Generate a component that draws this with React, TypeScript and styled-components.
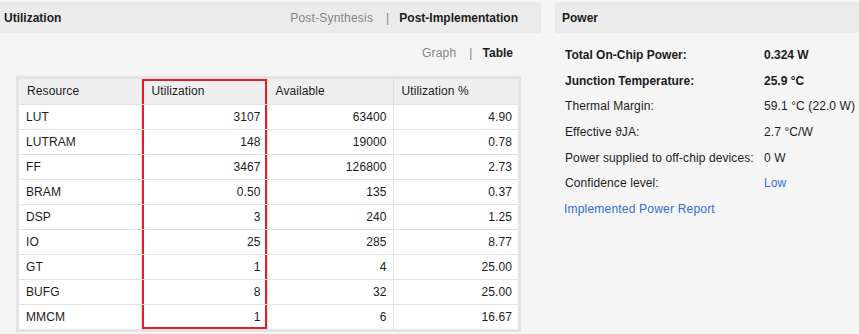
import React from "react";
import styled, { createGlobalStyle } from "styled-components";

const Global = createGlobalStyle`
  html, body { margin: 0; padding: 0; background: #f5f5f5; }
  body { font-family: "Liberation Sans", Arial, sans-serif; font-size: 12px; color: #1c1c1c; letter-spacing: 0.1px; }
`;

const Page = styled.div`
  display: flex;
  gap: 14px;
  padding-top: 2px;
  width: 859px;
  height: 334px;
  box-sizing: border-box;
  overflow: hidden;
`;

const Panel = styled.section<{ $w: number }>`
  width: ${(p) => p.$w}px;
  flex: none;
  display: flex;
  flex-direction: column;
`;

const PanelHeader = styled.div<{ $padL: number; $padR?: number }>`
  height: 31px;
  background: #ebebeb;
  display: flex;
  align-items: center;
  justify-content: space-between;
  padding: 0 ${(p) => p.$padR ?? 0}px 0 ${(p) => p.$padL}px;
`;

const Title = styled.span`
  font-weight: bold;
  font-size: 12px;
  letter-spacing: 0;
`;

const Tabs = styled.div`
  display: flex;
  align-items: center;
`;

const Tab = styled.span<{ $active?: boolean }>`
  font-weight: ${(p) => (p.$active ? "bold" : "normal")};
  letter-spacing: ${(p) => (p.$active ? "0" : "0.2px")};
  color: ${(p) => (p.$active ? "#1c1c1c" : "#858585")};
`;

const Sep = styled.span`
  color: #858585;
  margin: 0 10px 0 13px;
`;

const ViewBar = styled.div`
  height: 40px;
  display: flex;
  justify-content: flex-end;
  align-items: center;
  padding: 0 28px 3px 0;
`;

const TableFrame = styled.div`
  margin-left: 16px;
  width: 499px;
  border: 3px solid #e4e4e4;
`;

const Table = styled.table`
  width: 499px;
  border-collapse: collapse;
  table-layout: fixed;
  background: #fff;
`;

const Th = styled.th<{ $hl?: boolean }>`
  height: 25px;
  box-sizing: border-box;
  background: #efefef;
  font-weight: normal;
  text-align: left;
  padding: 0 6px 0 8px;
  border-right: 1px solid #e2e2e2;
  border-bottom: 1px solid #e2e2e2;
  &:last-child { border-right: none; }
  ${(p) => p.$hl && `box-shadow: inset 2px 0 0 #e41e26, inset -2px 0 0 #e41e26, inset 0 2px 0 #e41e26; padding-left: 10px;`}
`;

const Td = styled.td<{ $num?: boolean; $hl?: boolean; $last?: boolean }>`
  height: 25px;
  box-sizing: border-box;
  text-align: ${(p) => (p.$num ? "right" : "left")};
  padding: 0 6px 0 7px;
  border-right: 1px solid #e2e2e2;
  border-bottom: 1px solid #e2e2e2;
  &:last-child { border-right: none; }
  ${(p) =>
    p.$hl &&
    `box-shadow: inset 2px 0 0 #e41e26, inset -2px 0 0 #e41e26${p.$last ? ", inset 0 -2px 0 #e41e26" : ""};`}
`;

const Tr = styled.tr<{ $last?: boolean }>`
  ${(p) => p.$last && `td { border-bottom: none; }`}
`;

const PowerBody = styled.div`
  padding: 9px 0 0 10px;
  display: flex;
  flex-direction: column;
`;

const PRow = styled.div`
  display: grid;
  grid-template-columns: 199px 1fr;
  height: 25.7px;
  align-items: center;
`;

const PLabel = styled.span<{ $bold?: boolean }>`
  font-weight: ${(p) => (p.$bold ? "bold" : "normal")};
  letter-spacing: ${(p) => (p.$bold ? "0" : "inherit")};
`;

const PValue = styled.span<{ $bold?: boolean; $link?: boolean }>`
  font-weight: ${(p) => (p.$bold ? "bold" : "normal")};
  letter-spacing: ${(p) => (p.$bold ? "0" : "inherit")};
  color: ${(p) => (p.$link ? "#2f6fd8" : "inherit")};
`;

const Link = styled.a`
  color: #2f6fd8;
  text-decoration: none;
  letter-spacing: 0.2px;
  height: 25.7px;
  display: flex;
  align-items: center;
  margin-left: -1px;
`;

const rows: [string, string, string, string][] = [
  ["LUT", "3107", "63400", "4.90"],
  ["LUTRAM", "148", "19000", "0.78"],
  ["FF", "3467", "126800", "2.73"],
  ["BRAM", "0.50", "135", "0.37"],
  ["DSP", "3", "240", "1.25"],
  ["IO", "25", "285", "8.77"],
  ["GT", "1", "4", "25.00"],
  ["BUFG", "8", "32", "25.00"],
  ["MMCM", "1", "6", "16.67"],
];

const power: { label: string; value: string; bold?: boolean; link?: boolean }[] = [
  { label: "Total On-Chip Power:", value: "0.324 W", bold: true },
  { label: "Junction Temperature:", value: "25.9 °C", bold: true },
  { label: "Thermal Margin:", value: "59.1 °C (22.0 W)" },
  { label: "Effective \u03D1JA:", value: "2.7 °C/W" },
  { label: "Power supplied to off-chip devices:", value: "0 W" },
  { label: "Confidence level:", value: "Low", link: true },
];

export default function App() {
  return (
    <>
      <Global />
      <Page>
        <Panel $w={541}>
          <PanelHeader $padL={4} $padR={23}>
            <Title>Utilization</Title>
            <Tabs>
              <Tab>Post-Synthesis</Tab>
              <Sep>|</Sep>
              <Tab $active>Post-Implementation</Tab>
            </Tabs>
          </PanelHeader>
          <ViewBar>
            <Tabs>
              <Tab>Graph</Tab>
              <Sep>|</Sep>
              <Tab $active>Table</Tab>
            </Tabs>
          </ViewBar>
          <TableFrame>
            <Table>
              <colgroup>
                <col style={{ width: 122 }} />
                <col style={{ width: 126 }} />
                <col style={{ width: 126 }} />
                <col style={{ width: 125 }} />
              </colgroup>
              <thead>
                <tr>
                  <Th>Resource</Th>
                  <Th $hl>Utilization</Th>
                  <Th>Available</Th>
                  <Th>Utilization %</Th>
                </tr>
              </thead>
              <tbody>
                {rows.map((r, i) => {
                  const last = i === rows.length - 1;
                  return (
                    <Tr key={r[0]} $last={last}>
                      <Td>{r[0]}</Td>
                      <Td $num $hl $last={last}>{r[1]}</Td>
                      <Td $num>{r[2]}</Td>
                      <Td $num>{r[3]}</Td>
                    </Tr>
                  );
                })}
              </tbody>
            </Table>
          </TableFrame>
        </Panel>
        <Panel $w={304}>
          <PanelHeader $padL={7}>
            <Title>Power</Title>
          </PanelHeader>
          <PowerBody>
            {power.map((p) => (
              <PRow key={p.label}>
                <PLabel $bold={p.bold}>{p.label}</PLabel>
                <PValue $bold={p.bold} $link={p.link}>{p.value}</PValue>
              </PRow>
            ))}
            <Link href="#">Implemented Power Report</Link>
          </PowerBody>
        </Panel>
      </Page>
    </>
  );
}
